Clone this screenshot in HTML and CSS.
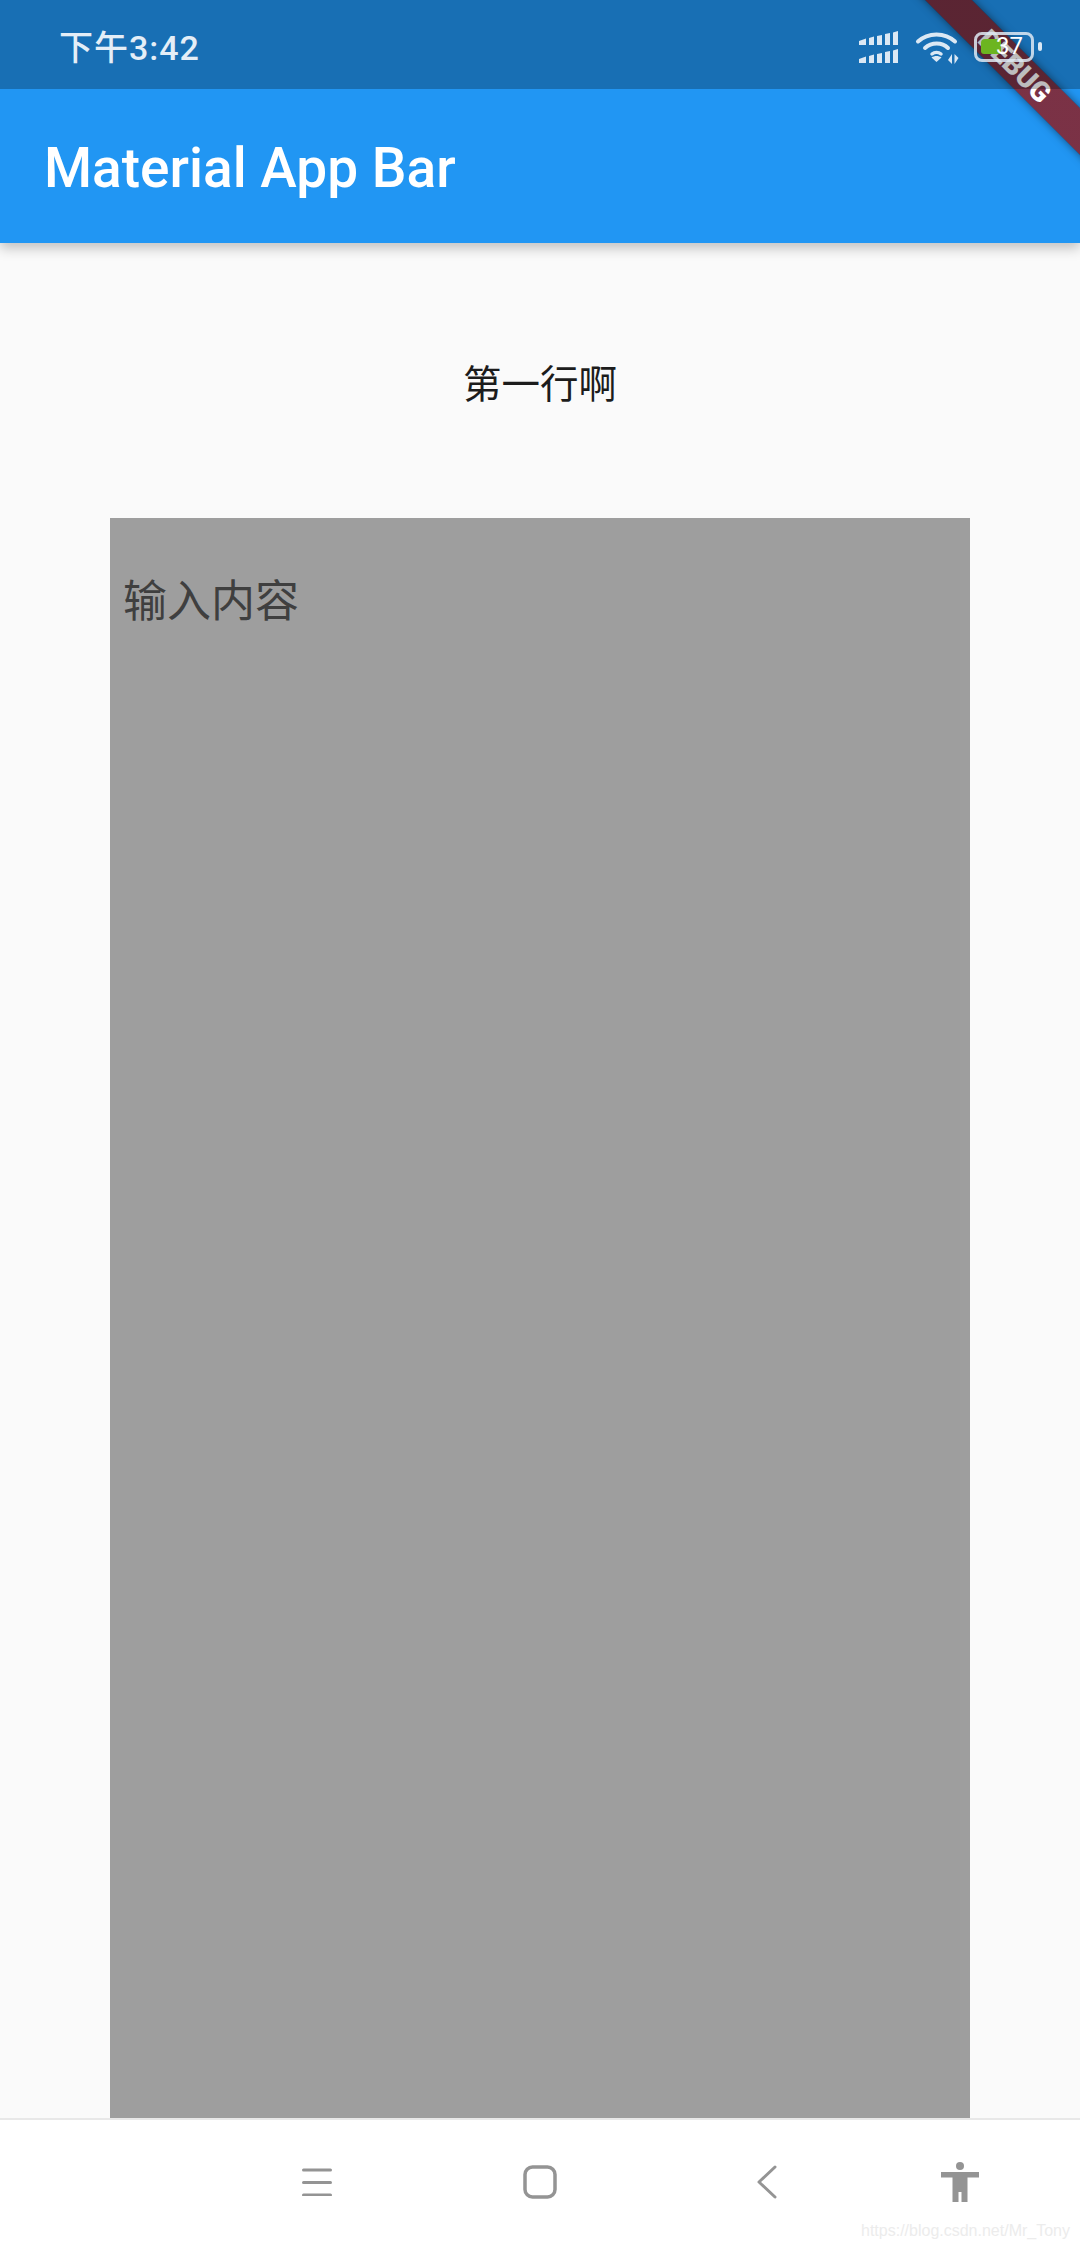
FILE: index.html
```html
<!DOCTYPE html>
<html lang="zh">
<head>
<meta charset="utf-8">
<title>Material App Bar</title>
<link rel="stylesheet" href="styles.css">
</head>
<body>
<div class="screen">
  <header class="header">
    <div class="status">
      <span class="time">下午3:42</span>
      <div class="status-icons">
        <svg class="signal" width="42" height="32" viewBox="0 0 42 32" fill="#dbe8f4">
          <path d="M1 10l7-2.500v6.500h-7zM11 7l5-1.500v8.500h-5zM19 5l5-1v10h-5zM27 3l5-1v12h-5zM35 1.500l5-1.500v14h-5z"/>
          <path d="M1 28l7-2.500v6.500h-7zM11 25l5-1.500v8.500h-5zM19 23l5-1v10h-5zM27 21l5-1v12h-5zM35 19.500l5-1.500v14h-5z"/>
        </svg>
        <svg class="wifi" width="44" height="34" viewBox="0 0 44 34" fill="none" stroke="#dbe8f4" stroke-linecap="round">
          <path d="M3 10.500C13 1 30 1 40 10.500" stroke-width="4"/>
          <path d="M10 17C16.500 11 27 11 33 17" stroke-width="4"/>
          <path d="M17 23C19.500 21 23.500 21 26 23" stroke-width="3.500"/>
          <path d="M21.500 31l-5-4.500c3-2 7-2 10 0z" fill="#dbe8f4" stroke="none"/>
          <path d="M37 23v10l-4-4zM39.500 33v-10l4 4z" fill="#dbe8f4" stroke="none"/>
        </svg>
        <div class="battery">
          <div class="battery-body">
            <span class="battery-fill"></span>
            <span class="battery-level">37</span>
          </div>
          <span class="battery-cap"></span>
        </div>
      </div>
    </div>
    <div class="appbar">
      <h1 class="title">Material App Bar</h1>
    </div>
    <div class="banner-clip">
      <div class="banner">DEBUG</div>
    </div>
  </header>
  <main class="content">
    <div class="first-row">第一行啊</div>
    <div class="input-box">
      <span class="hint">输入内容</span>
    </div>
  </main>
  <nav class="nav">
    <svg width="30" height="28" viewBox="0 0 30 28" stroke="#949494" stroke-width="3" stroke-linecap="round">
      <path d="M1.500 2h27M1.500 14.500h27M1.500 27h27"/>
    </svg>
    <svg width="34" height="34" viewBox="0 0 34 34" fill="none" stroke="#949494" stroke-width="3.500">
      <rect x="2" y="2" width="30" height="30" rx="7.500"/>
    </svg>
    <svg width="20" height="34" viewBox="0 0 20 34" fill="none" stroke="#949494" stroke-width="3" stroke-linecap="round" stroke-linejoin="round">
      <path d="M18 2L2 17l16 15"/>
    </svg>
    <svg width="38" height="40" viewBox="0 0 38 40" fill="#949494">
      <circle cx="19" cy="4" r="4"/>
      <path d="M0 10h38v5.500H26.500V40h-6V30h-3V40h-6V15.500H0z"/>
    </svg>
    <span class="watermark">https://blog.csdn.net/Mr_Tony</span>
  </nav>
</div>
</body>
</html>
```
FILE: styles.css
```css
* {
  box-sizing: border-box;
}

html,
body {
  margin: 0;
  padding: 0;
}

body {
  width: 1080px;
  height: 2248px;
  overflow: hidden;
  font-family: "Noto Sans CJK SC", "Noto Sans", sans-serif;
}

.screen {
  display: flex;
  flex-direction: column;
  width: 1080px;
  height: 2248px;
  background: #fafafa;
}

.header {
  position: relative;
  z-index: 2;
  flex: none;
  height: 243px;
  background: #2196f3;
  box-shadow: 0 5px 12px rgba(0, 0, 0, 0.24);
}

.status {
  position: relative;
  z-index: 3;
  display: flex;
  align-items: center;
  justify-content: space-between;
  height: 89px;
  padding: 0 38px 0 59px;
  background: rgba(0, 0, 0, 0.26);
}

.time {
  font-family: Roboto, "Noto Sans CJK SC", sans-serif;
  font-size: 34px;
  font-weight: 500;
  line-height: 40px;
  padding-top: 6px;
  letter-spacing: 1px;
  color: #e4eef7;
}

.status-icons {
  display: flex;
  align-items: center;
  padding-top: 4px;
}

.signal {
  margin-right: 15px;
}

.wifi {
  margin-right: 15px;
  margin-top: 2px;
}

.battery {
  display: flex;
  align-items: center;
}

.battery-body {
  position: relative;
  width: 60px;
  height: 30px;
  border: 3.500px solid rgba(222, 233, 243, 0.85);
  border-radius: 8px;
}

.battery-fill {
  position: absolute;
  left: 4px;
  top: 4px;
  width: 20px;
  height: 15px;
  border-radius: 4px 1px 1px 3px;
  background: #6cb520;
}

.battery-level {
  position: absolute;
  left: 19px;
  top: 0;
  font-family: Roboto, sans-serif;
  font-size: 24px;
  line-height: 23px;
  color: #ffffff;
}

.battery-cap {
  width: 4px;
  height: 9px;
  margin-left: 4px;
  border-radius: 2px;
  background: #dbe8f4;
}

.appbar {
  display: flex;
  align-items: center;
  height: 154px;
  padding: 4px 0 0 44px;
}

.title {
  margin: 0;
  font-family: Roboto, sans-serif;
  font-size: 55px;
  font-weight: 500;
  line-height: 64px;
  letter-spacing: 0;
  color: #ffffff;
}

.banner-clip {
  position: absolute;
  top: 0;
  right: 0;
  z-index: 2;
  width: 300px;
  height: 300px;
  overflow: hidden;
}

.banner {
  position: absolute;
  left: 67px;
  top: 52px;
  width: 340px;
  height: 33px;
  padding-right: 6px;
  background: linear-gradient(rgba(183, 28, 28, 0.63), rgba(183, 28, 28, 0.63)), rgba(0, 0, 0, 0.42);
  box-shadow: 0 0 8px rgba(0, 0, 0, 0.5);
  transform: rotate(45deg);
  font-family: Roboto, sans-serif;
  font-size: 28px;
  font-weight: 900;
  line-height: 33px;
  text-align: center;
  color: #ffffff;
}

.content {
  flex: 1;
  min-height: 0;
  overflow: hidden;
}

.first-row {
  display: flex;
  align-items: center;
  justify-content: center;
  height: 275px;
  font-size: 38.500px;
  color: #1c1c1c;
}

.input-box {
  width: 860px;
  height: 1600px;
  margin: 0 auto;
  padding: 50px 0 0 13px;
  background: #9e9e9e;
}

.hint {
  display: block;
  font-size: 44px;
  line-height: 60px;
  color: #3f3f3f;
}

.nav {
  position: relative;
  z-index: 3;
  flex: none;
  display: grid;
  grid-template-columns: 222px 224px 230px 156px;
  align-items: center;
  justify-items: center;
  height: 130px;
  padding: 0 0 4px 206px;
  border-top: 2px solid #e8e8e8;
  background: #ffffff;
}

.watermark {
  position: absolute;
  right: 10px;
  bottom: 6px;
  font-family: "Liberation Sans", sans-serif;
  font-size: 16px;
  line-height: 22px;
  color: #ececec;
}
```
